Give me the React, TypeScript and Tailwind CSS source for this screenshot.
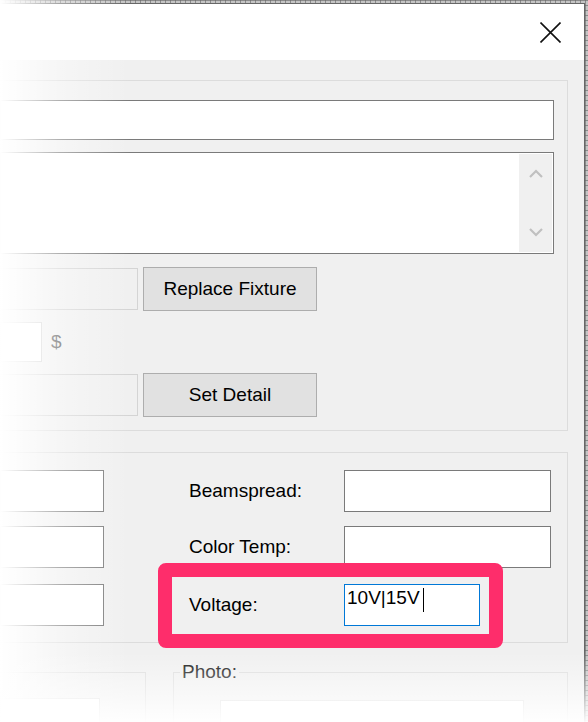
import React from "react";

const font = "[font-family:'Liberation_Sans',Arial,sans-serif]";

function Chevron({ up }: { up?: boolean }) {
  return (
    <svg width="14" height="9" viewBox="0 0 14 9" className="block">
      <path
        d={up ? "M1 8 L7 2 L13 8" : "M1 1 L7 7 L13 1"}
        fill="none"
        stroke="#c0c0c0"
        strokeWidth="2.2"
      />
    </svg>
  );
}

export default function App() {
  return (
    <div
      className={`relative w-[588px] h-[722px] overflow-hidden bg-[#c4c4c4] bg-[linear-gradient(90deg,rgba(100,100,100,0.6)_1px,transparent_1px),linear-gradient(rgba(100,100,100,0.6)_1px,transparent_1px)] bg-[size:5px_5px] ${font}`}
    >
      <div className="mt-[3px] mr-[3px] h-[719px] border-t border-r border-[#666666] bg-white flex flex-col">
        {/* title bar */}
        <div className="h-[56px] flex items-center justify-end pr-[23px] shrink-0">
          <svg width="21" height="21" viewBox="0 0 21 21" className="block">
            <path d="M0.5 0.5 L20.5 20.5 M20.5 0.5 L0.5 20.5" stroke="#111" strokeWidth="1.6" />
          </svg>
        </div>

        {/* body */}
        <div className="flex-1 bg-[#f0f0f0] pt-[20px] pr-[16px] flex flex-col text-[19px] text-black">
          {/* group 1 */}
          <div className="border-t border-r border-b border-[#dcdcdc] pt-[19px] pr-[13px] pb-[13px] flex flex-col">
            <div className="h-[40px] border border-[#7a7a7a] bg-white" />
            <div className="mt-[12px] h-[102px] border border-[#7a7a7a] bg-white flex justify-end">
              <div className="w-[33px] my-[1px] mr-[1px] bg-[#f0f0f0] flex flex-col items-center justify-between pt-[15px] pb-[15px]">
                <Chevron up />
                <Chevron />
              </div>
            </div>
            <div className="mt-[13px] flex items-center h-[44px]">
              <div className="w-[138px] h-[42px] border border-[#d4d4d4] bg-[#f0f0f0]" />
              <button className="ml-[5px] w-[174px] h-[44px] border border-[#adadad] bg-[#e1e1e1] flex items-center justify-center text-[19px] text-black">
                Replace Fixture
              </button>
            </div>
            <div className="mt-[11px] flex items-center h-[40px]">
              <div className="w-[42px] h-[40px] border border-[#d0d0d0] bg-white" />
              <span className="ml-[9px] text-[#555555]">$</span>
            </div>
            <div className="mt-[11px] flex items-center h-[44px]">
              <div className="w-[138px] h-[42px] border border-[#d4d4d4] bg-[#f0f0f0]" />
              <button className="ml-[5px] w-[174px] h-[44px] border border-[#adadad] bg-[#e1e1e1] flex items-center justify-center text-[19px] text-black">
                Set Detail
              </button>
            </div>
          </div>

          {/* group 2 */}
          <div className="mt-[21px] border-t border-r border-b border-[#dcdcdc] pt-[17px] pb-[16px] flex flex-col">
            <div className="flex items-center h-[42px]">
              <div className="w-[104px] h-[42px] border border-[#7a7a7a] bg-white" />
              <span className="ml-[85px] w-[155px]">Beamspread:</span>
              <div className="w-[207px] h-[42px] border border-[#7a7a7a] bg-white" />
            </div>
            <div className="mt-[14px] flex items-center h-[42px]">
              <div className="w-[104px] h-[42px] border border-[#7a7a7a] bg-white" />
              <span className="ml-[85px] w-[155px]">Color Temp:</span>
              <div className="w-[207px] h-[42px] border border-[#7a7a7a] bg-white" />
            </div>
            <div className="mt-[16px] flex items-center h-[42px]">
              <div className="w-[104px] h-[42px] border border-[#7a7a7a] bg-white" />
              <span className="ml-[85px] w-[155px]">Voltage:</span>
              <div className="w-[136px] h-[42px] border border-[#0078d7] bg-white pl-[2px] pt-[2px] flex items-start">
                <span className="leading-[22px]">10V|15V</span>
                <span className="ml-[3px] mt-[1px] w-px h-[24px] bg-black" />
              </div>
            </div>
          </div>

          {/* bottom groups */}
          <div className="flex items-start">
            <div className="mt-[29px] w-[146px] h-[80px] border-t border-r border-[#dcdcdc] pt-[25px]">
              <div className="w-[100px] h-[40px] border border-[#d9d9d9] bg-white" />
            </div>
            <fieldset className="mt-[18px] ml-[27px] flex-1 h-[80px] border-t border-l border-r border-[#dcdcdc]">
              <legend className="ml-[6px] px-[2px] leading-[22px] text-[19px] text-[#111]">Photo:</legend>
              <div className="mt-[17px] ml-[46px] w-[304px] h-[40px] border border-[#dcdcdc] bg-white" />
            </fieldset>
          </div>
        </div>
      </div>

      {/* annotation highlight */}
      <div className="pointer-events-none absolute left-[158px] top-[563px] w-[345px] h-[85px] border-[14px] border-[#fe2d6b] rounded-[8px]" />

      {/* edge fades */}
      <div className="pointer-events-none absolute left-0 top-0 bottom-0 w-[130px] bg-[linear-gradient(to_right,#ffffff_0px,rgba(255,255,255,0.8)_20px,rgba(255,255,255,0.4)_60px,rgba(255,255,255,0)_130px)]" />
      <div className="pointer-events-none absolute left-0 right-0 bottom-0 h-[70px] bg-[linear-gradient(to_bottom,rgba(255,255,255,0)_0%,rgba(255,255,255,0.5)_55%,rgba(255,255,255,0.96)_100%)]" />
    </div>
  );
}
